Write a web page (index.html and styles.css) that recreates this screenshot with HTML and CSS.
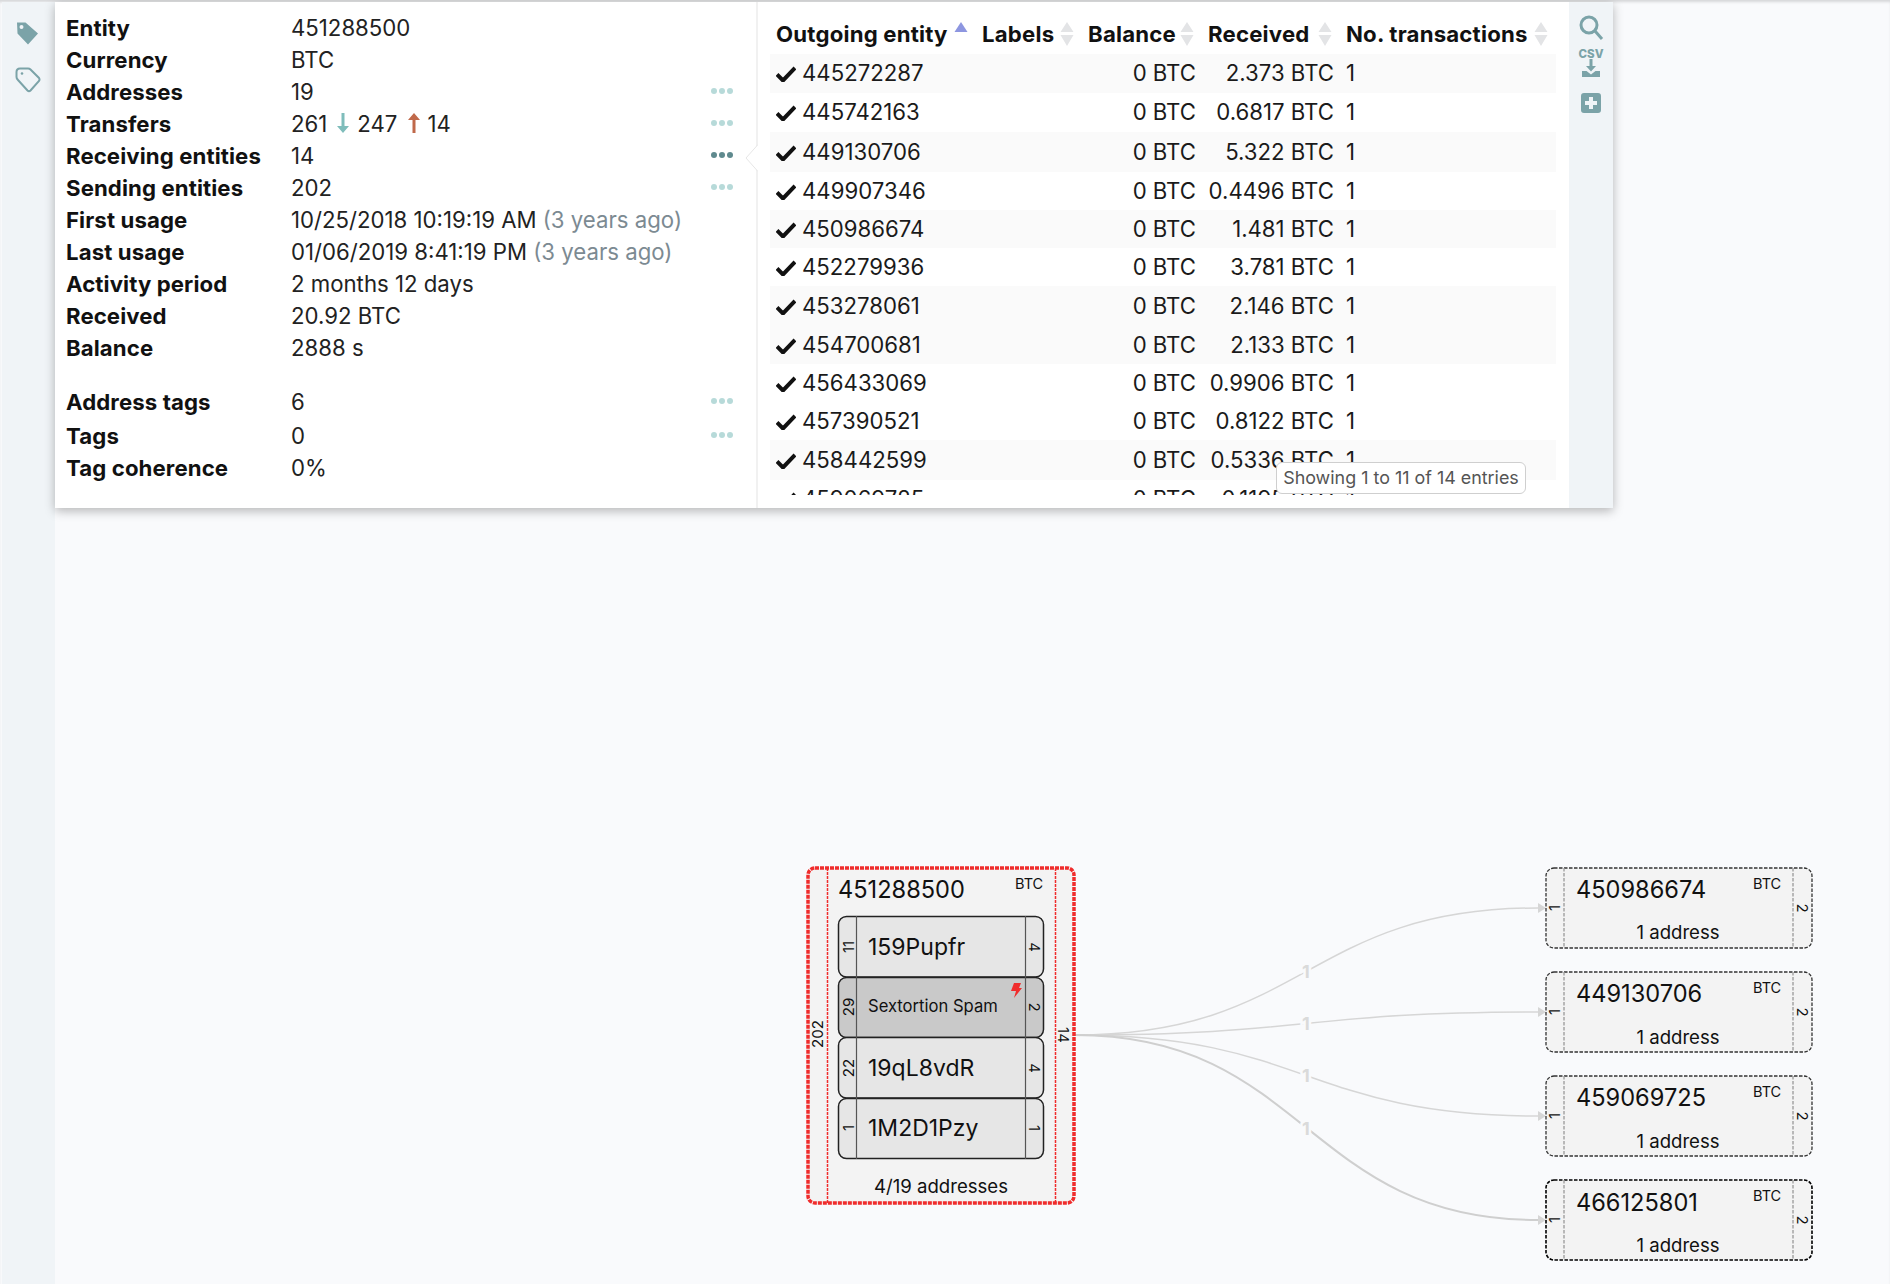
FILE: index.html
```html
<!DOCTYPE html>
<html lang="en">
<head>
<meta charset="utf-8">
<title>Entity 451288500</title>
<link rel="stylesheet" href="styles.css">
</head>
<body>
<div class="app">
  <svg class="graph" width="1890" height="1284" viewBox="0 0 1890 1284">
    <g class="edges">
      <path class="edge" d="M1075 1035C1306 1035 1306 908 1538 908"/>
      <path class="edge" d="M1075 1035C1306 1035 1306 1012 1538 1012"/>
      <path class="edge" d="M1075 1035C1306 1035 1306 1116 1538 1116"/>
      <path class="edge edge-thick" d="M1075 1035C1306 1035 1306 1220 1538 1220"/>
      <polygon class="head" points="1538,903 1546,908 1538,913"/>
      <polygon class="head" points="1538,1007 1546,1012 1538,1017"/>
      <polygon class="head" points="1538,1111 1546,1116 1538,1121"/>
      <polygon class="head" points="1538,1215 1546,1220 1538,1225"/>
      <text class="edge-label" x="1306" y="971">1</text>
      <text class="edge-label" x="1306" y="1023">1</text>
      <text class="edge-label" x="1306" y="1075">1</text>
      <text class="edge-label" x="1306" y="1128">1</text>
    </g>

    <rect class="entity" x="808" y="868" width="266" height="335" rx="7"/>
    <line class="entity-rule" x1="827.5" y1="868" x2="827.5" y2="1203"/>
    <line class="entity-rule" x1="1055.5" y1="868" x2="1055.5" y2="1203"/>
    <text class="title" x="838" y="898">451288500</text>
    <text class="cur" x="1015" y="889">BTC</text>
    <text class="side" transform="rotate(-90 817 1034)" x="817" y="1034">202</text>
    <text class="side" transform="rotate(90 1063 1035)" x="1063" y="1035">14</text>

    <rect class="addr" x="838.5" y="916.5" width="205" height="60.5" rx="8"/>
    <rect class="addr addr-sel" x="838.5" y="977.5" width="205" height="60" rx="8"/>
    <rect class="addr" x="838.5" y="1037.5" width="205" height="60.5" rx="8"/>
    <rect class="addr" x="838.5" y="1098.5" width="205" height="60" rx="8"/>
    <line class="addr-rule" x1="856.5" y1="916" x2="856.5" y2="1159"/>
    <line class="addr-rule" x1="1025.5" y1="916" x2="1025.5" y2="1159"/>
    <text class="addr-name" x="868" y="955">159Pupfr</text>
    <text class="addr-tag" x="868" y="1012">Sextortion Spam</text>
    <text class="addr-name" x="868" y="1076">19qL8vdR</text>
    <text class="addr-name" x="868" y="1136">1M2D1Pzy</text>
    <polygon class="bolt" points="1014,983 1021,983 1019,988 1022,988 1014,998 1016,991 1011,991"/>
    <text class="side" transform="rotate(-90 848 947)" x="848" y="947">11</text>
    <text class="side" transform="rotate(-90 848 1007)" x="848" y="1007">29</text>
    <text class="side" transform="rotate(-90 848 1068)" x="848" y="1068">22</text>
    <text class="side" transform="rotate(-90 848 1128)" x="848" y="1128">1</text>
    <text class="side" transform="rotate(90 1034 947)" x="1034" y="947">4</text>
    <text class="side" transform="rotate(90 1034 1007)" x="1034" y="1007">2</text>
    <text class="side" transform="rotate(90 1034 1068)" x="1034" y="1068">4</text>
    <text class="side" transform="rotate(90 1034 1128)" x="1034" y="1128">1</text>
    <text class="foot" x="941" y="1193">4/19 addresses</text>

    <g>
      <rect class="out" x="1546" y="868" width="266" height="80" rx="8"/>
      <line class="out-rule" x1="1564" y1="868" x2="1564" y2="948"/>
      <line class="out-rule" x1="1793" y1="868" x2="1793" y2="948"/>
      <text class="title" x="1576" y="898">450986674</text>
      <text class="cur" x="1753" y="889">BTC</text>
      <text class="foot" x="1678" y="939">1 address</text>
      <text class="side" transform="rotate(-90 1554 908)" x="1554" y="908">1</text>
      <text class="side" transform="rotate(90 1802 908)" x="1802" y="908">2</text>
    </g>
    <g>
      <rect class="out" x="1546" y="972" width="266" height="80" rx="8"/>
      <line class="out-rule" x1="1564" y1="972" x2="1564" y2="1052"/>
      <line class="out-rule" x1="1793" y1="972" x2="1793" y2="1052"/>
      <text class="title" x="1576" y="1002">449130706</text>
      <text class="cur" x="1753" y="993">BTC</text>
      <text class="foot" x="1678" y="1044">1 address</text>
      <text class="side" transform="rotate(-90 1554 1012)" x="1554" y="1012">1</text>
      <text class="side" transform="rotate(90 1802 1012)" x="1802" y="1012">2</text>
    </g>
    <g>
      <rect class="out" x="1546" y="1076" width="266" height="80" rx="8"/>
      <line class="out-rule" x1="1564" y1="1076" x2="1564" y2="1156"/>
      <line class="out-rule" x1="1793" y1="1076" x2="1793" y2="1156"/>
      <text class="title" x="1576" y="1106">459069725</text>
      <text class="cur" x="1753" y="1097">BTC</text>
      <text class="foot" x="1678" y="1148">1 address</text>
      <text class="side" transform="rotate(-90 1554 1116)" x="1554" y="1116">1</text>
      <text class="side" transform="rotate(90 1802 1116)" x="1802" y="1116">2</text>
    </g>
    <g>
      <rect class="out out-strong" x="1546" y="1180" width="266" height="80" rx="8"/>
      <line class="out-rule" x1="1564" y1="1180" x2="1564" y2="1260"/>
      <line class="out-rule" x1="1793" y1="1180" x2="1793" y2="1260"/>
      <text class="title" x="1576" y="1211">466125801</text>
      <text class="cur" x="1753" y="1201">BTC</text>
      <text class="foot" x="1678" y="1252">1 address</text>
      <text class="side" transform="rotate(-90 1554 1220)" x="1554" y="1220">1</text>
      <text class="side" transform="rotate(90 1802 1220)" x="1802" y="1220">2</text>
    </g>
  </svg>

  <nav class="rail">
    <svg class="rail-icon" width="26" height="26" viewBox="0 0 26 26"><path class="icon-fill" fill-rule="evenodd" d="M3 2.500H11.500L24 13.500 14 24.500 3.500 13.500ZM7.500 5A2 2 0 1 0 7.500 9 2 2 0 1 0 7.500 5Z"/></svg>
    <svg class="rail-icon rail-icon-line" width="26" height="26" viewBox="0 0 26 26"><path class="icon-line" d="M5 1.500H13Q14.500 1.500 15.500 2.500L24 11Q25 12.500 24 14L15.500 23.500Q14 25 12.500 23.500L3 13Q1.500 11.500 1.500 10V5Q1.500 1.500 5 1.500Z"/><circle class="icon-fill" cx="7" cy="6.500" r="1.300"/></svg>
  </nav>

  <section class="panel">
    <div class="details">
      <div class="row"><b class="key">Entity</b><span class="val">451288500</span></div>
      <div class="row"><b class="key">Currency</b><span class="val">BTC</span></div>
      <div class="row"><b class="key">Addresses</b><span class="val">19</span><i class="dots"></i></div>
      <div class="row"><b class="key">Transfers</b><span class="val val-flow">261
        <svg class="arrow arrow-in" width="12" height="20" viewBox="0 0 12 20"><path d="M4.500 0H7.500V13H12L6 20 0 13H4.500Z"/></svg>247
        <svg class="arrow arrow-out" width="12" height="20" viewBox="0 0 12 20"><path d="M4.500 20H7.500V7H12L6 0 0 7H4.500Z"/></svg>14</span><i class="dots"></i></div>
      <div class="row"><b class="key">Receiving entities</b><span class="val">14</span><i class="dots dots-on"></i></div>
      <div class="row"><b class="key">Sending entities</b><span class="val">202</span><i class="dots"></i></div>
      <div class="row"><b class="key">First usage</b><span class="val">10/25/2018 10:19:19 AM <span class="ago">(3 years ago)</span></span></div>
      <div class="row"><b class="key">Last usage</b><span class="val">01/06/2019 8:41:19 PM <span class="ago">(3 years ago)</span></span></div>
      <div class="row"><b class="key">Activity period</b><span class="val">2 months 12 days</span></div>
      <div class="row"><b class="key">Received</b><span class="val">20.92 BTC</span></div>
      <div class="row"><b class="key">Balance</b><span class="val">2888 s</span></div>
      <div class="row row-gap"><b class="key">Address tags</b><span class="val">6</span><i class="dots"></i></div>
      <div class="row row-tags"><b class="key">Tags</b><span class="val">0</span><i class="dots"></i></div>
      <div class="row"><b class="key">Tag coherence</b><span class="val">0%</span></div>
      <svg class="pointer" width="13" height="28" viewBox="0 0 13 28"><path d="M13 0.500L1 14 13 27.500"/></svg>
    </div>

    <div class="tablebox">
      <div class="clip">
        <table class="grid">
          <colgroup><col class="c1"><col class="c2"><col class="c3"><col class="c4"><col class="c5"></colgroup>
          <thead>
            <tr>
              <th><div class="th">Outgoing entity<svg class="sort" width="14" height="24" viewBox="0 0 14 24"><path class="sort-on" d="M7 0L13.500 10H.5Z"/></svg></div></th>
              <th><div class="th">Labels<svg class="sort" width="14" height="24" viewBox="0 0 14 24"><path class="sort-off" d="M7 0L13.500 10H.5ZM7 24L.5 13H13.500Z"/></svg></div></th>
              <th><div class="th">Balance<svg class="sort" width="14" height="24" viewBox="0 0 14 24"><path class="sort-off" d="M7 0L13.500 10H.5ZM7 24L.5 13H13.500Z"/></svg></div></th>
              <th><div class="th">Received<svg class="sort" width="14" height="24" viewBox="0 0 14 24"><path class="sort-off" d="M7 0L13.500 10H.5ZM7 24L.5 13H13.500Z"/></svg></div></th>
              <th><div class="th">No. transactions<svg class="sort" width="14" height="24" viewBox="0 0 14 24"><path class="sort-off" d="M7 0L13.500 10H.5ZM7 24L.5 13H13.500Z"/></svg></div></th>
            </tr>
          </thead>
          <tbody>
            <tr class="r39 odd"><td><svg class="check" width="20" height="16" viewBox="0 0 20 16"><path d="M1 8.500L7 14.500 19 2"/></svg>445272287</td><td></td><td class="num">0 BTC</td><td class="num">2.373 BTC</td><td class="tx">1</td></tr>
            <tr class="r39"><td><svg class="check" width="20" height="16" viewBox="0 0 20 16"><path d="M1 8.500L7 14.500 19 2"/></svg>445742163</td><td></td><td class="num">0 BTC</td><td class="num">0.6817 BTC</td><td class="tx">1</td></tr>
            <tr class="r40 odd"><td><svg class="check" width="20" height="16" viewBox="0 0 20 16"><path d="M1 8.500L7 14.500 19 2"/></svg>449130706</td><td></td><td class="num">0 BTC</td><td class="num">5.322 BTC</td><td class="tx">1</td></tr>
            <tr class="r38"><td><svg class="check" width="20" height="16" viewBox="0 0 20 16"><path d="M1 8.500L7 14.500 19 2"/></svg>449907346</td><td></td><td class="num">0 BTC</td><td class="num">0.4496 BTC</td><td class="tx">1</td></tr>
            <tr class="r38 odd"><td><svg class="check" width="20" height="16" viewBox="0 0 20 16"><path d="M1 8.500L7 14.500 19 2"/></svg>450986674</td><td></td><td class="num">0 BTC</td><td class="num">1.481 BTC</td><td class="tx">1</td></tr>
            <tr class="r38"><td><svg class="check" width="20" height="16" viewBox="0 0 20 16"><path d="M1 8.500L7 14.500 19 2"/></svg>452279936</td><td></td><td class="num">0 BTC</td><td class="num">3.781 BTC</td><td class="tx">1</td></tr>
            <tr class="r40 odd"><td><svg class="check" width="20" height="16" viewBox="0 0 20 16"><path d="M1 8.500L7 14.500 19 2"/></svg>453278061</td><td></td><td class="num">0 BTC</td><td class="num">2.146 BTC</td><td class="tx">1</td></tr>
            <tr class="r38 odd"><td><svg class="check" width="20" height="16" viewBox="0 0 20 16"><path d="M1 8.500L7 14.500 19 2"/></svg>454700681</td><td></td><td class="num">0 BTC</td><td class="num">2.133 BTC</td><td class="tx">1</td></tr>
            <tr class="r38"><td><svg class="check" width="20" height="16" viewBox="0 0 20 16"><path d="M1 8.500L7 14.500 19 2"/></svg>456433069</td><td></td><td class="num">0 BTC</td><td class="num">0.9906 BTC</td><td class="tx">1</td></tr>
            <tr class="r38"><td><svg class="check" width="20" height="16" viewBox="0 0 20 16"><path d="M1 8.500L7 14.500 19 2"/></svg>457390521</td><td></td><td class="num">0 BTC</td><td class="num">0.8122 BTC</td><td class="tx">1</td></tr>
            <tr class="r40 odd"><td><svg class="check" width="20" height="16" viewBox="0 0 20 16"><path d="M1 8.500L7 14.500 19 2"/></svg>458442599</td><td></td><td class="num">0 BTC</td><td class="num">0.5336 BTC</td><td class="tx">1</td></tr>
            <tr class="r38"><td><svg class="check" width="20" height="16" viewBox="0 0 20 16"><path d="M1 8.500L7 14.500 19 2"/></svg>459069725</td><td></td><td class="num">0 BTC</td><td class="num">0.1195 BTC</td><td class="tx">1</td></tr>
          </tbody>
        </table>
      </div>
      <div class="info">Showing 1 to 11 of 14 entries</div>
    </div>

    <aside class="tools">
      <svg class="tool" width="26" height="28" viewBox="0 0 26 28"><circle class="icon-line icon-thick" cx="11" cy="11" r="8"/><path class="icon-line icon-thick" d="M17 17L24 25"/></svg>
      <div class="csv"><span class="csv-text">CSV</span>
        <svg width="20" height="20" viewBox="0 0 20 20"><path class="icon-fill" d="M8.500 0H11.500V7H15L10 12.500 5 7H8.500ZM1 12H5.500L10 15.500 14.500 12H19V18H1Z"/></svg>
      </div>
      <svg class="tool tool-plus" width="20" height="20" viewBox="0 0 20 20"><path class="icon-fill" fill-rule="evenodd" d="M3 0H17Q20 0 20 3V17Q20 20 17 20H3Q0 20 0 17V3Q0 0 3 0ZM8 4V8H4V12H8V16H12V12H16V8H12V4Z"/></svg>
    </aside>
  </section>
</div>
</body>
</html>
```

FILE: styles.css
```css
* { box-sizing: border-box; }
html, body { margin: 0; height: 100%; }
body {
  background: #f9fafc;
  color: #1a1a1a;
  font-family: Inter, "Liberation Sans", sans-serif;
  font-size: 22.2px;
  overflow: hidden;
}
.app {
  position: relative;
  display: flex;
  width: 1890px;
  height: 1284px;
  box-shadow: inset 0 3px 3px -1px rgba(0,0,0,.14);
}

/* left rail */
.rail {
  position: relative;
  z-index: 2;
  flex: none;
  width: 53px;
  margin-top: 2px;
  margin-left: 2px;
  padding: 18px 0 0 12px;
  display: flex;
  flex-direction: column;
  gap: 21px;
  background: #f0f4f7;
}
.rail-icon-line { margin-left: 1px; }
.icon-fill { fill: #7ba3a8; }
.icon-line { fill: none; stroke: #7ba3a8; stroke-width: 2; }
.icon-thick { stroke-width: 3; }

/* top panel */
.panel {
  position: absolute;
  z-index: 3;
  top: 2px;
  left: 55px;
  width: 1558px;
  height: 506px;
  display: flex;
  background: #fff;
  box-shadow: 0 3px 10px rgba(0,0,0,.28);
}
.details {
  position: relative;
  flex: none;
  width: 703px;
  padding: 9px 0 0 11px;
  border-right: 2px solid #f1f1f1;
}
.row {
  display: flex;
  align-items: center;
  height: 32px;
}
.row-gap { margin-top: 22px; }
.row-tags { margin-top: 2px; }
.key {
  flex: none;
  width: 225px;
  font-weight: 700;
  letter-spacing: .1px;
  color: #111;
}
.val { flex: 1; color: #222; white-space: nowrap; }
.val-flow { display: flex; align-items: center; }
.ago { color: #7c8a92; }
.arrow { margin: 0 8px 0 10px; }
.arrow-out { margin: 0 7px 0 11px; }
.arrow-in { fill: #7fbdbb; }
.arrow-out { fill: #c0694a; }
.dots {
  flex: none;
  width: 6px;
  height: 6px;
  margin-right: 31px;
  border-radius: 50%;
  background: #b7dad9;
  box-shadow: 8px 0 0 #b7dad9, 16px 0 0 #b7dad9;
  transform: translateX(-8px);
}
.dots-on {
  background: #5f8a8e;
  box-shadow: 8px 0 0 #5f8a8e, 16px 0 0 #5f8a8e;
}
.pointer {
  position: absolute;
  top: 142px;
  right: -2px;
  fill: #fff;
  stroke: #e6e6e6;
}

/* table */
.tablebox {
  position: relative;
  flex: none;
  width: 811px;
  padding-left: 12px;
}
.clip {
  width: 786px;
  height: 493px;
  overflow: hidden;
}
.grid {
  width: 786px;
  table-layout: fixed;
  border-collapse: collapse;
}
.c1 { width: 206px; }
.c2 { width: 106px; }
.c3 { width: 120px; }
.c4 { width: 138px; }
.c5 { width: 216px; }
.grid th, .grid td { padding: 0 6px; white-space: nowrap; }
.grid td { padding-bottom: 2px; }
.grid thead tr { height: 52px; }
.grid th { text-align: left; font-weight: 700; color: #111; padding-top: 10px; }
.th {
  display: flex;
  align-items: center;
  justify-content: space-between;
  padding-right: 2px;
  letter-spacing: .2px;
}
.sort { flex: none; margin-top: 1px; }
.sort-on { fill: #8d96e0; }
.sort-off { fill: #e3e4e6; }
.r38 { height: 38px; }
.r39 { height: 39px; }
.r40 { height: 40px; }
.odd { background: #fafafa; }
.check {
  margin-right: 6px;
  fill: none;
  stroke: #111;
  stroke-width: 4;
  vertical-align: -1px;
}
.num { text-align: right; }
.tx { padding-left: 7px; }
.info {
  position: absolute;
  top: 460px;
  left: 518px;
  width: 250px;
  height: 32px;
  background: #fff;
  border: 1px solid #cfcfcf;
  border-radius: 6px;
  color: #555;
  font-size: 17.9px;
  line-height: 30px;
  text-align: center;
}

/* tools */
.tools {
  flex: none;
  width: 44px;
  padding-top: 12px;
  background: #f0f4f7;
  display: flex;
  flex-direction: column;
  align-items: center;
}
.tool-plus { margin-top: 12px; }
.csv {
  display: flex;
  flex-direction: column;
  align-items: center;
  margin-top: 7px;
  height: 32px;
}
.csv-text {
  color: #7ba3a8;
  font-size: 11.5px;
  font-weight: 800;
  line-height: 10px;
}

/* graph */
.graph {
  position: absolute;
  top: 0;
  left: 0;
  z-index: 1;
  font-family: Inter, "Liberation Sans", sans-serif;
}
.edge { fill: none; stroke: #d6d6d6; stroke-width: 1.5; }
.edge-thick { stroke: #cfcfcf; stroke-width: 2; }
.head { fill: #d6d6d6; }
.edge-label {
  fill: #dadada;
  font-size: 18px;
  font-weight: 700;
  text-anchor: middle;
  dominant-baseline: central;
  paint-order: stroke;
  stroke: #f9fafc;
  stroke-width: 5;
}
.entity {
  fill: #f3f3f3;
  stroke: #f02c2c;
  stroke-width: 3.5;
  stroke-dasharray: 4 1;
}
.entity-rule {
  stroke: #f02c2c;
  stroke-width: 1.5;
  stroke-dasharray: 3 1;
}
.title { font-size: 23.6px; fill: #111; }
.cur { font-size: 14.5px; fill: #111; }
.side {
  font-size: 15px;
  fill: #111;
  text-anchor: middle;
  dominant-baseline: central;
}
.addr { fill: #e6e6e6; stroke: #222; stroke-width: 1.5; }
.addr-sel { fill: #c9c9c9; }
.addr-rule { stroke: #555; stroke-width: 1.2; }
.addr-name { font-size: 23px; fill: #111; }
.addr-tag { font-size: 16.6px; fill: #111; }
.bolt { fill: #f02c2c; }
.foot { font-size: 18.6px; fill: #111; text-anchor: middle; }
.out {
  fill: #f3f3f3;
  stroke: #333;
  stroke-width: 1.3;
  stroke-dasharray: 3.5 1.5;
}
.out-strong { stroke: #000; stroke-width: 1.6; }
.out-rule {
  stroke: #999;
  stroke-width: 1.3;
  stroke-dasharray: 3.5 1.5;
}
```
